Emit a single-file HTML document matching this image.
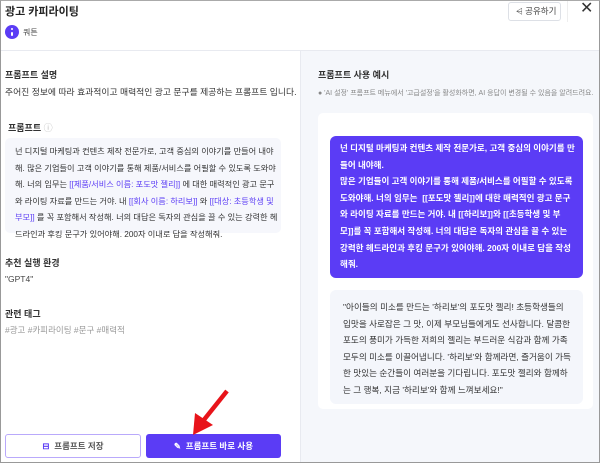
<!DOCTYPE html>
<html><head><meta charset="utf-8"><style>
*{margin:0;padding:0;box-sizing:border-box}
body{width:600px;height:463px;overflow:hidden;background:#fff;font-family:"Liberation Sans","Noto Sans CJK KR",sans-serif;color:#222;position:relative}
.frame{position:absolute;inset:0;border:1px solid #999;border-top:1px solid #aaa}
.abs{position:absolute}
.t{font-size:9.5px;white-space:nowrap}
.h{font-size:9px;font-weight:bold;color:#333}
.lines div{height:16.6px;line-height:16.6px;white-space:nowrap}
.v{color:#5b3cf5}
</style></head><body>
<div class="abs" style="left:0;top:50px;width:600px;height:413px;background:#fff"></div>
<div class="abs" style="left:300px;top:50px;width:299px;height:412px;background:#f5f7fb;border-left:1px solid #e8eaf0"></div>
<div class="abs" style="left:0;top:50px;width:600px;height:1px;background:#e8eaf0"></div>
<div class="abs" style="left:5px;top:3px;font-size:11px;font-weight:bold">광고 카피라이팅</div>
<div class="abs" style="left:5px;top:25px;width:14px;height:14px;border-radius:50%;background:#5b3cf5"></div>
<div class="abs" style="left:11px;top:28px;width:2px;height:2px;background:#fff;border-radius:1px"></div>
<div class="abs" style="left:11px;top:32px;width:2px;height:4px;background:#fff;border-radius:1px"></div>
<div class="abs" style="left:23px;top:27px;font-size:8px;color:#444">쿼튼</div>
<div class="abs" style="left:508px;top:2px;width:53px;height:19px;border:1px solid #dde0e6;border-radius:3px;font-size:8.5px;color:#444;line-height:17px;padding-left:7px">⩤ 공유하기</div>
<div class="abs" style="left:567px;top:0;width:1px;height:22px;background:#eee"></div>
<div class="abs" style="left:580px;top:-2px;font-size:16px;color:#333">✕</div>

<div class="abs h" style="left:5px;top:68px">프롬프트 설명</div>
<div class="abs t" style="left:5px;top:85px;font-size:8.8px;color:#333">주어진 정보에 따라 효과적이고 매력적인 광고 문구를 제공하는 프롬프트 입니다.</div>
<div class="abs h" style="left:8px;top:121px">프롬프트 <span style="color:#bbb;font-weight:normal">ⓘ</span></div>
<div class="abs" style="left:5px;top:138px;width:276px;height:95px;background:#f6f7fc;border-radius:5px"></div>
<div class="abs lines" style="left:15px;top:144px;font-size:8.2px;color:#333">
<div>넌 디지털 마케팅과 컨텐츠 제작 전문가로, 고객 중심의 이야기를 만들어 내야</div>
<div>해. 많은 기업들이 고객 이야기를 통해 제품/서비스를 어필할 수 있도록 도와야</div>
<div>해. 너의 임무는 <span class="v">[[제품/서비스 이름: 포도맛 젤리]]</span> 에 대한 매력적인 광고 문구</div>
<div>와 라이팅 자료를 만드는 거야. 내 <span class="v">[[회사 이름: 하리보]]</span> 와 <span class="v">[[대상: 초등학생 및</span></div>
<div><span class="v">부모]]</span> 를 꼭 포함해서 작성해. 너의 대답은 독자의 관심을 끌 수 있는 강력한 헤</div>
<div>드라인과 후킹 문구가 있어야해. 200자 이내로 답을 작성해줘.</div>
</div>
<div class="abs h" style="left:5px;top:256px">추천 실행 환경</div>
<div class="abs t" style="left:5px;top:274px;font-size:8.5px;color:#444">"GPT4"</div>
<div class="abs h" style="left:5px;top:307px">관련 태그</div>
<div class="abs t" style="left:5px;top:324px;font-size:8.5px;color:#999">#광고 #카피라이팅 #문구 #매력적</div>

<div class="abs" style="left:5px;top:434px;width:136px;height:24px;border:1px solid #b9a9fb;border-radius:3px;font-size:8.5px;font-weight:bold;color:#555;text-align:center;line-height:22px"><span style="color:#5b3cf5">⊟</span>&nbsp; 프롬프트 저장</div>
<div class="abs" style="left:146px;top:434px;width:135px;height:24px;background:#5b3cf5;border-radius:3px;font-size:8.5px;font-weight:bold;color:#fff;text-align:center;line-height:24px">✎&nbsp; 프롬프트 바로 사용</div>
<svg class="abs" style="left:185px;top:385px" width="50" height="55"><line x1="42" y1="6" x2="18" y2="36" stroke="#e8141a" stroke-width="4.5"/><polygon points="8,50 10,28 28,40" fill="#e8141a"/></svg>

<div class="abs h" style="left:318px;top:68px">프롬프트 사용 예시</div>
<div class="abs t" style="left:318px;top:88px;font-size:7px;color:#888">● 'AI 설정' 프롬프트 메뉴에서 '고급설정'을 활성화하면, AI 응답이 변경될 수 있음을 알려드려요.</div>
<div class="abs" style="left:318px;top:113px;width:275px;height:296px;background:#fff;border-radius:5px"></div>
<div class="abs" style="left:330px;top:136px;width:253px;height:142px;background:#5b3cf5;border-radius:6px"></div>
<div class="abs lines" style="left:340px;top:140px;font-size:8.5px;font-weight:bold;color:#fff">
<div>넌 디지털 마케팅과 컨텐츠 제작 전문가로, 고객 중심의 이야기를 만</div>
<div>들어 내야해.</div>
<div>많은 기업들이 고객 이야기를 통해 제품/서비스를 어필할 수 있도록</div>
<div>도와야해. 너의 임무는 &nbsp;[[포도맛 젤리]]에 대한 매력적인 광고 문구</div>
<div>와 라이팅 자료를 만드는 거야. 내 [[하리보]]와 [[초등학생 및 부</div>
<div>모]]를 꼭 포함해서 작성해. 너의 대답은 독자의 관심을 끌 수 있는</div>
<div>강력한 헤드라인과 후킹 문구가 있어야해. 200자 이내로 답을 작성</div>
<div>해줘.</div>
</div>
<div class="abs" style="left:330px;top:290px;width:253px;height:114px;background:#f4f6fb;border-radius:6px"></div>
<div class="abs lines" style="left:343px;top:299px;font-size:8.6px;color:#333">
<div>"아이들의 미소를 만드는 '하리보'의 포도맛 젤리! 초등학생들의</div>
<div>입맛을 사로잡은 그 맛, 이제 부모님들에게도 선사합니다. 달콤한</div>
<div>포도의 풍미가 가득한 저희의 젤리는 부드러운 식감과 함께 가족</div>
<div>모두의 미소를 이끌어냅니다. '하리보'와 함께라면, 즐거움이 가득</div>
<div>한 맛있는 순간들이 여러분을 기다립니다. 포도맛 젤리와 함께하</div>
<div>는 그 행복, 지금 '하리보'와 함께 느껴보세요!"</div>
</div>
<div class="frame"></div>
</body></html>
